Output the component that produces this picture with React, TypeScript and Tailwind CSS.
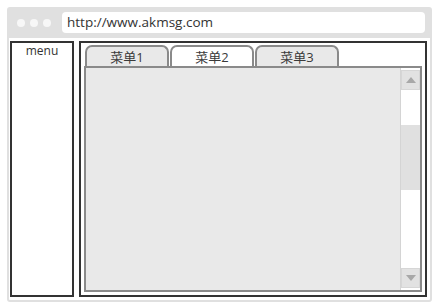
import React from "react";

const font = { fontFamily: '"Open Sans", "Noto Sans CJK SC", sans-serif' };

function Tab({ label, active }: { label: string; active?: boolean }) {
  return (
    <div
      className={
        "w-[84px] h-[21px] border-2 border-b-0 border-[#8a8a8a] rounded-t-[7px] flex items-center justify-center text-[13px] text-[#3a3a3a] leading-none " +
        (active ? "bg-white" : "bg-[#e9e9e9]")
      }
    >
      <span className="pt-[1px]">{label}</span>
    </div>
  );
}

export default function App() {
  return (
    <div className="w-[437px] h-[305px] bg-white overflow-hidden" style={font}>
      <div className="ml-[7px] mt-[7px] w-[425px] h-[295px] border-2 border-[#e0e0e0] rounded-[3px] flex flex-col">
        {/* top bar */}
        <div className="h-[29px] bg-[#e0e0e0] flex items-start">
          <div className="flex gap-[5px] pl-[8px] mt-[10px]">
            <div className="w-[8px] h-[8px] rounded-full bg-[#f7f7f7]" />
            <div className="w-[8px] h-[8px] rounded-full bg-[#f7f7f7]" />
            <div className="w-[8px] h-[8px] rounded-full bg-[#f7f7f7]" />
          </div>
          <div className="ml-[11px] mt-[3px] w-[363px] h-[21px] bg-white rounded-[4px] flex items-center pl-[5px] text-[13.5px] text-[#333] leading-none">
            http://www.akmsg.com
          </div>
        </div>
        {/* body */}
        <div className="flex flex-1 pl-[1px] pt-[3px] pb-[3px] pr-[3px] gap-[5px]">
          <div className="w-[64px] border-2 border-[#333] flex justify-center">
            <span className="text-[12px] text-[#333] leading-none mt-[2px]">menu</span>
          </div>
          <div className="flex-1 border-2 border-[#333] p-[3px] pt-[2px] flex flex-col">
            <div className="flex gap-[1px] pl-[1px]">
              <Tab label="菜单1" />
              <Tab label="菜单2" active />
              <Tab label="菜单3" />
            </div>
            <div className="flex-1 border-2 border-[#8a8a8a] bg-[#e9e9e9] flex justify-end">
              <div className="w-[20px] h-full bg-white border-l border-[#d4d4d4] flex flex-col py-[2px]">
                <div className="h-[20px] bg-[#e2e2e2] border border-[#d6d6d6] flex items-center justify-center">
                  <svg width="10" height="6" viewBox="0 0 10 6">
                    <polygon points="0,6 10,6 5,0" fill="#a8a8a8" />
                  </svg>
                </div>
                <div className="h-[35px]" />
                <div className="h-[65px] bg-[#e0e0e0]" />
                <div className="flex-1" />
                <div className="h-[20px] bg-[#e2e2e2] border border-[#d6d6d6] flex items-center justify-center">
                  <svg width="10" height="6" viewBox="0 0 10 6">
                    <polygon points="0,0 10,0 5,6" fill="#a8a8a8" />
                  </svg>
                </div>
              </div>
            </div>
          </div>
        </div>
      </div>
    </div>
  );
}
